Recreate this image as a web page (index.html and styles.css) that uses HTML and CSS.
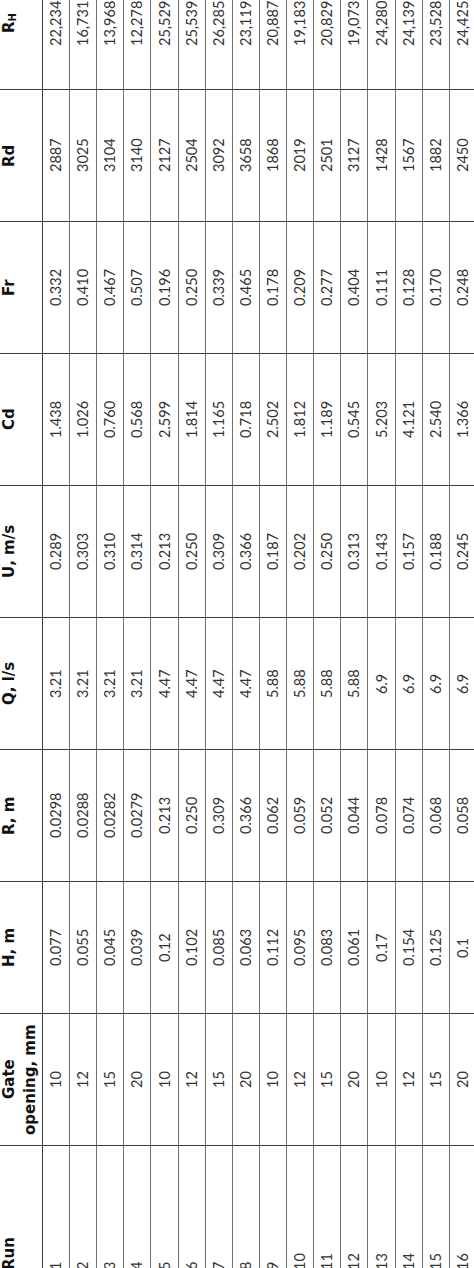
FILE: index.html
```html
<!DOCTYPE html>
<html lang="en">
<head>
<meta charset="utf-8">
<title>Gate runs</title>
<link rel="stylesheet" href="styles.css">
</head>
<body>
<table class="sheet">
<thead>
<tr class="head">
<th class="run">Run</th><th>Gate<br>opening, mm</th><th>H, m</th><th>R, m</th><th>Q, l/s</th><th>U, m/s</th><th>Cd</th><th>Fr</th><th>Rd</th><th>R<sub>H</sub></th>
</tr>
</thead>
<tbody>
<tr><td class="run">1</td><td>10</td><td>0.077</td><td>0.0298</td><td>3.21</td><td>0.289</td><td>1.438</td><td>0.332</td><td>2887</td><td>22,234</td></tr>
<tr><td class="run">2</td><td>12</td><td>0.055</td><td>0.0288</td><td>3.21</td><td>0.303</td><td>1.026</td><td>0.410</td><td>3025</td><td>16,731</td></tr>
<tr><td class="run">3</td><td>15</td><td>0.045</td><td>0.0282</td><td>3.21</td><td>0.310</td><td>0.760</td><td>0.467</td><td>3104</td><td>13,968</td></tr>
<tr><td class="run">4</td><td>20</td><td>0.039</td><td>0.0279</td><td>3.21</td><td>0.314</td><td>0.568</td><td>0.507</td><td>3140</td><td>12,278</td></tr>
<tr><td class="run">5</td><td>10</td><td>0.12</td><td>0.213</td><td>4.47</td><td>0.213</td><td>2.599</td><td>0.196</td><td>2127</td><td>25,529</td></tr>
<tr><td class="run">6</td><td>12</td><td>0.102</td><td>0.250</td><td>4.47</td><td>0.250</td><td>1.814</td><td>0.250</td><td>2504</td><td>25,539</td></tr>
<tr><td class="run">7</td><td>15</td><td>0.085</td><td>0.309</td><td>4.47</td><td>0.309</td><td>1.165</td><td>0.339</td><td>3092</td><td>26,285</td></tr>
<tr><td class="run">8</td><td>20</td><td>0.063</td><td>0.366</td><td>4.47</td><td>0.366</td><td>0.718</td><td>0.465</td><td>3658</td><td>23,119</td></tr>
<tr><td class="run">9</td><td>10</td><td>0.112</td><td>0.062</td><td>5.88</td><td>0.187</td><td>2.502</td><td>0.178</td><td>1868</td><td>20,887</td></tr>
<tr><td class="run">10</td><td>12</td><td>0.095</td><td>0.059</td><td>5.88</td><td>0.202</td><td>1.812</td><td>0.209</td><td>2019</td><td>19,183</td></tr>
<tr><td class="run">11</td><td>15</td><td>0.083</td><td>0.052</td><td>5.88</td><td>0.250</td><td>1.189</td><td>0.277</td><td>2501</td><td>20,829</td></tr>
<tr><td class="run">12</td><td>20</td><td>0.061</td><td>0.044</td><td>5.88</td><td>0.313</td><td>0.545</td><td>0.404</td><td>3127</td><td>19,073</td></tr>
<tr><td class="run">13</td><td>10</td><td>0.17</td><td>0.078</td><td>6.9</td><td>0.143</td><td>5.203</td><td>0.111</td><td>1428</td><td>24,280</td></tr>
<tr><td class="run">14</td><td>12</td><td>0.154</td><td>0.074</td><td>6.9</td><td>0.157</td><td>4.121</td><td>0.128</td><td>1567</td><td>24,139</td></tr>
<tr><td class="run">15</td><td>15</td><td>0.125</td><td>0.068</td><td>6.9</td><td>0.188</td><td>2.540</td><td>0.170</td><td>1882</td><td>23,528</td></tr>
<tr><td class="run">16</td><td>20</td><td>0.1</td><td>0.058</td><td>6.9</td><td>0.245</td><td>1.366</td><td>0.248</td><td>2450</td><td>24,425</td></tr>
</tbody>
</table>
</body>
</html>
```

FILE: styles.css
```css
html, body {
  margin: 0;
  padding: 0;
  background: #ffffff;
}

body {
  width: 474px;
  height: 1268px;
  overflow: hidden;
}

.sheet {
  writing-mode: vertical-rl;
  transform: rotate(180deg);
  margin: -43px 0 0 -1px;
  border-collapse: separate;
  border-spacing: 0;
  table-layout: fixed;
  inline-size: 1313px;
  font-family: Lato, "DejaVu Sans", sans-serif;
  color: #333333;
}

.sheet th,
.sheet td {
  box-sizing: border-box;
  padding: 0;
  inline-size: 132px;
  border-inline-end: 1px solid #3c3c3c;
  border-block-end: 1px solid #6f6f6f;
  text-align: center;
  vertical-align: middle;
  white-space: nowrap;
}

.sheet .run {
  inline-size: 125px;
  text-align: start;
}

.head th {
  block-size: 44px;
  font-family: "DejaVu Sans", Lato, sans-serif;
  font-size: 15px;
  font-weight: 700;
  line-height: 21px;
  vertical-align: top;
  color: #111111;
  border-block-end-color: #3c3c3c;
}

.head sub {
  font-size: 10px;
  line-height: 0;
}

tbody td {
  block-size: 27.125px;
  font-size: 14.5px;
  font-weight: 400;
  line-height: 18px;
}
```
